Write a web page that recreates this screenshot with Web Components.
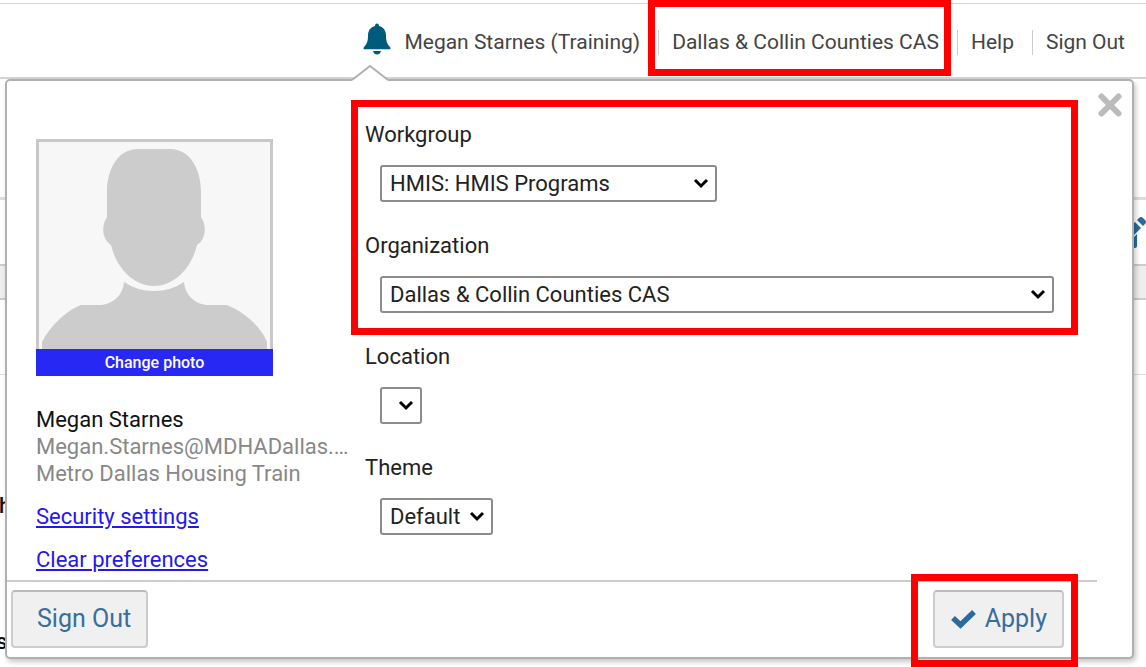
<!DOCTYPE html>
<html lang="en">
<head>
<meta charset="utf-8">
<meta name="viewport" content="width=device-width, initial-scale=1">
<title>User settings</title>
<style>
  body { margin: 0; font-family: Roboto, "Liberation Sans", sans-serif; font-size: 22px; color: #222; background: #fff; }
</style>
</head>
<body>
<app-page>
  <app-header slot="header"></app-header>
  <user-dialog slot="dialog"></user-dialog>
</app-page>

<script>
function define(name, html, setup) {
  const template = document.createElement('template');
  template.innerHTML = html;
  customElements.define(name, class extends HTMLElement {
    constructor() {
      super();
      this.attachShadow({ mode: 'open' }).append(template.content.cloneNode(true));
    }
    connectedCallback() { if (setup) setup(this, this.shadowRoot); }
  });
}

/* Red frame drawn round the slotted content; --mark-inset sets its reach. */
define('mark-frame', `
  <style>
    :host { display: block; position: relative; }
    .frame { position: absolute; inset: var(--mark-inset, -8px); border: 7px solid #f00; pointer-events: none; z-index: 5; }
  </style>
  <slot></slot><div class="frame"></div>
`);

define('app-header', `
  <style>
    :host { display: block; margin-top: 3px; border-top: 1px solid #d5d5da; border-bottom: 2px solid #d4d4d4; }
    nav { display: flex; align-items: center; justify-content: flex-end; box-sizing: border-box; height: 73px; padding: 3px 21px 0 0; font-size: 21px; line-height: 25px; white-space: nowrap; }
    a { color: #444; text-decoration: none; }
    a.item { display: block; border-left: 1px solid #ccc; padding-left: 13px; }
    .next { margin-left: 18px; }
    .user { display: flex; align-items: center; gap: 13px; }
    svg { display: block; margin-bottom: 6px; }
    mark-frame { --mark-inset: -30px -12px -21px -10px; }
  </style>
  <nav>
    <a class="user" href="#">
      <svg width="28" height="32" viewBox="0 0 28 32" aria-hidden="true">
        <path fill="#005a7d" d="M14 0.500C12.700 0.500 12 1.400 12 2.900C7.500 3.900 5 7.500 5 12.500C5 19 3.500 21.500 1 24Q0 25.200 0.800 26.200H27.200Q28 25.200 27 24C24.500 21.500 23 19 23 12.500C23 7.500 20.500 3.900 16 2.900C16 1.400 15.300 0.500 14 0.500Z"/>
        <path fill="#005a7d" d="M10 28H18Q17 31.500 14 31.500T10 28Z"/>
      </svg>
      <span>Megan Starnes (Training)</span>
    </a>
    <mark-frame class="next"><a class="item" href="#">Dallas &amp; Collin Counties CAS</a></mark-frame>
    <a class="item next" href="#">Help</a>
    <a class="item next" href="#">Sign Out</a>
  </nav>
`);

define('app-page', `
  <style>
    :host { position: relative; min-height: 100vh; overflow: hidden; display: flow-root; }
    .title { height: 118px; border-bottom: 3px solid #ddd; }
    .tools { display: flex; justify-content: flex-end; align-items: center; height: 64px; border-bottom: 2px solid #ccc; }
    .band { height: 32px; background: #eee; border-bottom: 2px solid #ccc; }
    .row { height: 74px; border-bottom: 1px solid #ddd; }
    .body { display: grid; gap: 110px; padding-top: 118px; line-height: 26px; color: #111; font-weight: 500; }
    .body span { margin-left: -1px; }
    .body .last { margin-left: -4px; }
    svg { display: block; }
  </style>
  <slot name="header"></slot>
  <main>
    <div class="title"></div>
    <div class="tools">
      <svg width="28" height="34" viewBox="0 0 28 34" aria-hidden="true">
        <path fill="#2a6a9e" d="M21 3Q23 1 25 3L27 5Q29 7 27 9L25 11L19 5ZM17 7L23 13L12 24L5 25L6 18ZM16 22L19 19V31Q19 33 17 33H2V29H16Z"/>
      </svg>
    </div>
    <div class="band"></div>
    <div class="row"></div>
    <div class="body"><span>h</span><span class="last">s</span></div>
  </main>
  <slot name="dialog"></slot>
`);

define('profile-card', `
  <style>
    :host { display: block; min-width: 0; }
    .photo { position: relative; width: 237px; height: 237px; box-sizing: border-box; border: 3px solid #c8c8c8; background: #f7f7f7; }
    .photo svg { display: block; width: 231px; height: 231px; }
    .photo button { position: absolute; left: -3px; right: -3px; bottom: -3px; height: 27px; border: 0; padding: 0; background: #2828f5; color: #fff; font: 500 16px/27px Roboto, "Liberation Sans", sans-serif; }
    .who { margin-top: 30px; line-height: 27px; color: #888; white-space: nowrap; }
    .who div { overflow: hidden; text-overflow: ellipsis; }
    .name { color: #111; }
    a { display: block; width: max-content; margin-top: 16px; line-height: 27px; color: #2318ee; text-decoration: underline; }
  </style>
  <div class="photo">
    <svg viewBox="0 0 231 231" aria-hidden="true">
      <g fill="#ccc">
        <path d="M99 7H131C151 7 162 27 162 50V75C168 84 167 97 158 103C152 128 134 144 115 144S78 128 72 103C63 97 62 84 68 75V50C68 27 79 7 99 7Z"/>
        <path d="M85 140Q98 149 115 149T145 140C146 154 158 163 169 163H188C207 171 222 185 228 200V231H3V200C11 185 26 169 42 163H62C73 162 84 154 85 140Z"/>
      </g>
    </svg>
    <button type="button">Change photo</button>
  </div>
  <div class="who">
    <div class="name">Megan Starnes</div>
    <div>Megan.Starnes@MDHADallas.org</div>
    <div>Metro Dallas Housing Train</div>
  </div>
  <a href="#">Security settings</a>
  <a href="#">Clear preferences</a>
`);

define('select-field', `
  <style>
    :host { display: block; }
    label { display: block; line-height: 26px; color: #222; }
    .box { position: relative; width: var(--field-width, 100%); margin: 17px 0 0 15px; }
    :host([fill]) .box { width: auto; }
    select { appearance: none; display: block; width: 100%; height: 37px; box-sizing: border-box; margin: 0; border: 2px solid #8c8c8c; border-radius: 3px; padding: 0 24px 1px 8px; background: #fff; color: #222; font: inherit; }
    svg { position: absolute; right: 8px; top: 13px; pointer-events: none; }
  </style>
  <label for="field"></label>
  <div class="box">
    <select id="field"><option></option></select>
    <svg width="16" height="11" viewBox="0 0 16 11" aria-hidden="true"><path d="M2 2L8 8L14 2" fill="none" stroke="#000" stroke-width="3"/></svg>
  </div>
`, (host, root) => {
  root.querySelector('label').textContent = host.getAttribute('label');
  root.querySelector('option').textContent = host.getAttribute('value') || '';
});

define('action-button', `
  <style>
    :host { display: block; }
    button { display: flex; align-items: center; gap: 8px; height: 58px; box-sizing: border-box; margin: 0; padding: 0 15px 0 var(--pad-left, 15px); border: 2px solid #ccc; border-top-color: #bbb; border-radius: 4px; background: #f0f0f0; color: #386e9d; font: 25px/30px Roboto, "Liberation Sans", sans-serif; white-space: nowrap; }
  </style>
  <button type="button"><slot name="icon"></slot><slot></slot></button>
`);

define('user-dialog', `
  <style>
    :host { display: block; position: absolute; top: 79px; left: 5px; right: 12px; border: 2px solid #b0b0b0; border-radius: 5px; background: #fff; box-shadow: 2px 3px 5px rgba(0,0,0,.22); }
    .pointer { position: absolute; top: -17px; left: 344px; }
    .close { position: absolute; top: 11px; right: 9px; width: 26px; height: 26px; border: 0; padding: 0; background: none; }
    svg { display: block; }
    .content { display: grid; grid-template-columns: 315px minmax(0, 1fr); column-gap: 14px; padding: 41px 78px 7px 29px; }
    profile-card { padding-top: 17px; }
    .fields, .group { display: grid; gap: 31px; align-content: start; }
    mark-frame.pair { --mark-inset: -22px -24px -22px -14px; }
    footer { display: flex; justify-content: space-between; margin-right: 35px; border-top: 2px solid #ccc; padding: 8px 33px 9px 4px; }
    mark-frame.apply { --mark-inset: -16px -14px -19px -22px; }
    .signout { --pad-left: 24px; }
  </style>
  <svg class="pointer" width="38" height="18" viewBox="0 0 38 18" aria-hidden="true"><path d="M1 16L19 2L37 16V18H1Z" fill="#fff"/><path d="M1 16L19 2L37 16" fill="none" stroke="#b0b0b0" stroke-width="2"/></svg>
  <button class="close" type="button" aria-label="Close">
    <svg width="26" height="26" viewBox="0 0 26 26"><path d="M4.500 4.500L21.500 21.500M21.500 4.500L4.500 21.500" stroke="#bbb" stroke-width="6" stroke-linecap="round"/></svg>
  </button>
  <div class="content">
    <profile-card></profile-card>
    <div class="fields">
      <mark-frame class="pair">
        <div class="group">
          <select-field label="Workgroup" value="HMIS: HMIS Programs" style="--field-width:337px"></select-field>
          <select-field label="Organization" value="Dallas &amp; Collin Counties CAS" fill></select-field>
        </div>
      </mark-frame>
      <select-field label="Location" style="--field-width:42px"></select-field>
      <select-field label="Theme" value="Default" style="--field-width:113px"></select-field>
    </div>
  </div>
  <footer>
    <action-button class="signout">Sign Out</action-button>
    <mark-frame class="apply">
      <action-button>
        <svg slot="icon" width="27" height="20" viewBox="0 0 27 20" aria-hidden="true"><path d="M3 9L10.500 16L24 3" fill="none" stroke="#2a6a9e" stroke-width="5.500"/></svg>Apply
      </action-button>
    </mark-frame>
  </footer>
`);
</script>
</body>
</html>
